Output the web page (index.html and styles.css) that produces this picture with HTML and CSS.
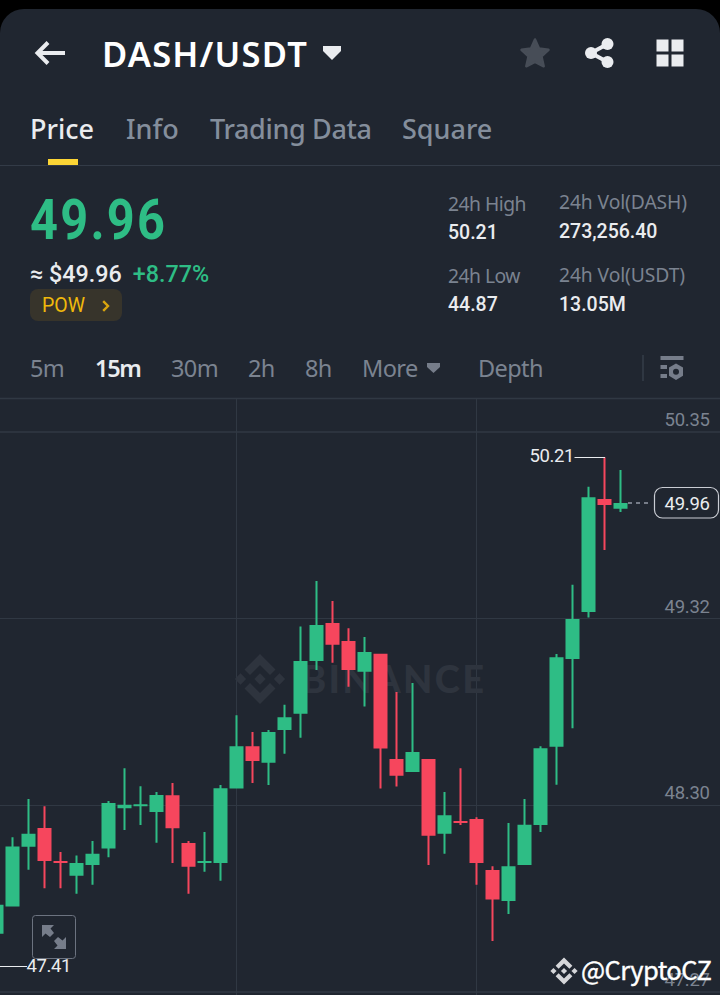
FILE: index.html
```html
<!DOCTYPE html>
<html lang="en">
<head>
    <meta charset="UTF-8">
    <meta name="viewport" content="width=device-width, initial-scale=1.0">
    <title>DASH/USDT</title>
    <link rel="stylesheet" href="styles.css">
</head>
<body>
    <div class="screen">
        <header class="header">
            <svg class="back" width="32" height="26" viewBox="0 0 32 26">
                <path d="M14 2.5L3.5 13L14 23.5M3.5 13H31" fill="none" stroke="#eaecef" stroke-width="4"/>
            </svg>
            <h1>DASH/USDT</h1>
            <svg class="caret" width="18" height="14" viewBox="0 0 18 14">
                <path d="M0 0H18V5L9 14L0 5Z" fill="#eaecef"/>
            </svg>
            <div class="actions">
                <svg width="32" height="32" viewBox="0 0 32 32">
                    <path d="M16 2.5L20 11.6L29.5 12.8L22.5 19.4L24.7 29.3L16 25L7.3 29.3L9.5 19.4L2.5 12.8L12 11.6Z" fill="#474d57" stroke="#474d57" stroke-width="2.5" stroke-linejoin="round"/>
                </svg>
                <svg width="32" height="32" viewBox="0 0 32 32">
                    <path d="M24.5 7L8 16L24.5 25" fill="none" stroke="#eaecef" stroke-width="4"/>
                    <circle cx="24.5" cy="7" r="6" fill="#eaecef"/>
                    <circle cx="8" cy="16" r="6" fill="#eaecef"/>
                    <circle cx="24.5" cy="25" r="6" fill="#eaecef"/>
                </svg>
                <svg width="28" height="28" viewBox="0 0 28 28">
                    <path d="M.5 .5h12v12h-12zM15.500 .5h12v12h-12zM.5 15.500h12v12h-12zM15.500 15.500h12v12h-12z" fill="#eaecef"/>
                </svg>
            </div>
        </header>

        <nav class="tabs">
            <a class="active">Price</a>
            <a>Info</a>
            <a>Trading Data</a>
            <a>Square</a>
        </nav>

        <section class="ticker">
            <div class="price-box">
                <div class="price"><span>49.96</span></div>
                <div class="sub"><span class="usd">≈ $49.96</span><span class="change">+8.77%</span></div>
                <div class="tag">
                    POW
                    <svg width="8" height="12" viewBox="0 0 8 12">
                        <path d="M1.200 1.200L6 6L1.200 10.800" fill="none" stroke="#d9a50e" stroke-width="2.400"/>
                    </svg>
                </div>
            </div>
            <div class="stats">
                <dl><dt>24h High</dt><dd>50.21</dd></dl>
                <dl><dt>24h Low</dt><dd>44.87</dd></dl>
            </div>
            <div class="stats volume">
                <dl><dt>24h Vol(DASH)</dt><dd>273,256.40</dd></dl>
                <dl><dt>24h Vol(USDT)</dt><dd>13.05M</dd></dl>
            </div>
        </section>

        <nav class="intervals">
            <span>5m</span>
            <span class="active">15m</span>
            <span>30m</span>
            <span>2h</span>
            <span>8h</span>
            <span class="more">More
                <svg width="13" height="10" viewBox="0 0 13 10"><path d="M0 0H13V4L6.500 10L0 4Z" fill="#767d8a"/></svg>
            </span>
            <span class="depth">Depth</span>
            <span class="settings">
                <svg width="24" height="26" viewBox="0 0 24 26">
                    <path d="M.5 1H23.500V5H.5zM.5 10H7V14H.5zM.5 19H7V23H.5z" fill="#767d8a"/>
                    <path fill-rule="evenodd" d="M16 8.500L23 12.600V20.800L16 25L9 20.800V12.600ZM16 13.700A3 3 0 1 0 16 19.700A3 3 0 1 0 16 13.700Z" fill="#767d8a"/>
                </svg>
            </span>
        </nav>

        <svg class="chart" width="720" height="598" viewBox="0 397 720 598">
            <defs>
                <g id="logo">
                    <path d="M0 -25L15.500 -9.500L10 -4L0 -14L-10 -4L-15.500 -9.500Z"/>
                    <path d="M0 25L15.500 9.500L10 4L0 14L-10 4L-15.500 9.500Z"/>
                    <path d="M0 -5.700L5.700 0L0 5.700L-5.700 0Z"/>
                    <path d="M-19.500 -5.700L-13.800 0L-19.500 5.700L-25.200 0Z"/>
                    <path d="M19.500 -5.700L25.200 0L19.500 5.700L13.800 0Z"/>
                </g>
            </defs>

            <g class="grid">
                <path d="M0 398.500H720M0 432H720M0 992H720" stroke-width="1.600"/>
                <path d="M0 618.500H720M0 805.500H720M236.500 398V995M476.500 398V995"/>
            </g>

            <g class="watermark">
                <use href="#logo" x="260" y="679"/>
                <text x="301" y="693" textLength="183">BINANCE</text>
            </g>

            <g id="candles"></g>

            <g class="axis">
                <text x="664.500" y="426" textLength="45.500">50.35</text>
                <text x="664.500" y="613" textLength="45.500">49.32</text>
                <text x="664.500" y="799" textLength="45.500">48.30</text>
                <text x="664.500" y="986" textLength="45.500">47.27</text>
            </g>

            <path d="M628 503H650" stroke="#9299a5" stroke-width="1.400" stroke-dasharray="4 4"/>
            <rect x="654.500" y="487.500" width="64" height="30.500" rx="8" fill="#202630" stroke="#c9ccd3" stroke-width="1.200"/>
            <g class="marks">
                <text x="664.500" y="510" textLength="45.500">49.96</text>
                <text x="529.500" y="462" textLength="45">50.21</text>
                <text x="26.500" y="972" textLength="45">47.41</text>
                <path d="M574.500 457.500H605M0 966.500H27"/>
            </g>

            <g class="expand">
                <rect x="32.500" y="915.500" width="43" height="43" rx="3"/>
                <path d="M42 925H54L50.500 928.500L54 933L50 937L45.500 933.500L42 937ZM66 949H54L57.500 945.500L54 941L58 937L62.500 940.500L66 937Z"/>
            </g>

            <g class="author">
                <use href="#logo" transform="translate(564 971) scale(.54)"/>
                <text x="581" y="980" textLength="131">@CryptoCZ</text>
            </g>
        </svg>
    </div>

    <script>
        // high, body top, body bottom, low, direction
        const candles = [
            [904.7, 904.7, 933.7, 933.7, 'up'],
            [837.3, 846.5, 906.5, 906.5, 'up'],
            [799, 833.7, 846.7, 869.7, 'up'],
            [806.3, 828, 861, 888.3, 'down'],
            [852, 861, 863, 888.3, 'down'],
            [855.5, 863, 875.7, 893.7, 'up'],
            [841, 853.7, 865, 884.7, 'up'],
            [801, 803, 848.5, 857.3, 'up'],
            [768.3, 804.8, 808.3, 830, 'up'],
            [786.3, 804.3, 806.3, 825, 'up'],
            [792, 795, 812, 842.7, 'up'],
            [783, 795.3, 828.3, 863, 'down'],
            [841, 843, 866.7, 893.7, 'down'],
            [832, 861, 863, 871.7, 'up'],
            [785, 788.3, 863, 880.7, 'up'],
            [715.3, 746.3, 788.5, 788.5, 'up'],
            [732, 746.3, 761, 783, 'down'],
            [730, 732, 762.7, 785, 'up'],
            [704.7, 717.3, 730, 753.7, 'up'],
            [626.5, 661, 713.7, 737.7, 'up'],
            [581, 625, 661, 670, 'up'],
            [601, 623, 644.7, 662.7, 'down'],
            [628.3, 641, 670, 686.7, 'down'],
            [637, 652, 671.7, 706.5, 'up'],
            [653.7, 653.7, 748.5, 788.5, 'down'],
            [692, 759, 775.7, 786.5, 'down'],
            [683, 752, 772, 772, 'up'],
            [759, 759, 835.7, 865, 'down'],
            [792, 815.3, 833.7, 853.7, 'up'],
            [768.3, 821, 823, 825, 'down'],
            [817.3, 819, 863, 884.7, 'down'],
            [866.3, 870, 899.5, 941, 'down'],
            [823, 866.3, 901, 914, 'up'],
            [799, 824.7, 865, 865, 'up'],
            [746.3, 748.3, 825, 832, 'up'],
            [654, 657.3, 746.7, 784.7, 'up'],
            [584.7, 619, 659, 728.3, 'up'],
            [486.7, 497.3, 612, 617.5, 'up'],
            [457.3, 499, 505, 550, 'down'],
            [470, 503, 508.7, 512, 'up']
        ];

        const svgNS = 'http://www.w3.org/2000/svg';
        const group = document.getElementById('candles');

        candles.forEach(([high, top, bottom, low, dir], i) => {
            const x = i * 16 - 3.5;
            const path = document.createElementNS(svgNS, 'path');
            path.setAttribute('class', dir);
            path.setAttribute('d', `M${x - 1} ${high}h2V${low}h-2ZM${x - 7} ${top}h14V${bottom}h-14Z`);
            group.appendChild(path);
        });
    </script>
</body>
</html>
```
FILE: styles.css
```css
body {
    margin: 0;
    padding-top: 9px;
    background: #000;
    font-family: 'Noto Sans', sans-serif;
    color: #eaecef;
}

.screen {
    width: 720px;
    height: 986px;
    background: #202630;
    border-radius: 24px 24px 0 0;
    overflow: hidden;
}

.header {
    display: flex;
    align-items: center;
    height: 90px;
    box-sizing: border-box;
    padding: 0 36px 2px 34px;
}

h1 {
    margin: 1px 0 0 36px;
    width: 206px;
    font-size: 34.5px;
    font-weight: 600;
    line-height: 48px;
    letter-spacing: 1.2px;
    color: #fff;
    white-space: nowrap;
}

.caret {
    margin-left: 15px;
}

.actions {
    display: flex;
    align-items: center;
    margin-left: auto;
}

.actions svg + svg {
    margin-left: 32px;
}

.actions svg:last-child {
    margin-left: 41px;
}

.tabs {
    display: grid;
    grid-template-columns: 96px 84px 192px 1fr;
    height: 66px;
    padding-left: 30px;
    border-bottom: 1px solid #333b47;
    font-size: 27px;
    font-weight: 500;
    line-height: 59px;
    color: #848e9c;
    white-space: nowrap;
}

.tabs a:nth-child(3) {
    letter-spacing: -0.35px;
}

.tabs .active {
    color: #eaecef;
}

.tabs .active::after {
    content: "";
    display: block;
    width: 30px;
    height: 6px;
    margin: 1px 0 0 18px;
    background: #fcd535;
}

.ticker {
    display: flex;
    height: 174px;
    padding-left: 30px;
}

.price-box {
    width: 418px;
    padding-top: 20px;
}

.price {
    height: 68px;
    font-family: Roboto, sans-serif;
    font-size: 56px;
    font-weight: 700;
    line-height: 68px;
    color: #2ebd85;
}

.price span {
    display: inline-block;
    letter-spacing: 2.6px;
    transform: scaleX(0.87);
    transform-origin: left;
}

.sub {
    display: flex;
    gap: 11px;
    margin-top: 3px;
    height: 32px;
    line-height: 34px;
    font-family: Roboto, sans-serif;
    font-size: 23.3px;
    font-weight: 500;
}

.change {
    color: #2ebd85;
}

.tag {
    display: flex;
    align-items: center;
    justify-content: space-between;
    box-sizing: border-box;
    width: 92px;
    height: 32px;
    padding: 1px 12px 0;
    border-radius: 8px;
    background: #37342b;
    font-family: Roboto, sans-serif;
    font-size: 19.5px;
    color: #f0b90b;
}

.stats {
    display: flex;
    flex-direction: column;
    gap: 16px;
    width: 111px;
    padding-top: 24px;
    white-space: nowrap;
}

.volume {
    gap: 15px;
    padding-top: 21px;
}

.stats dl {
    margin: 0;
}

.stats dt {
    font-size: 19.3px;
    line-height: 28px;
    letter-spacing: -0.1px;
    color: #7b8390;
}

.stats:not(.volume) dt {
    letter-spacing: -0.5px;
}

.volume dt {
    line-height: 30px;
}

.stats dd {
    margin: 0;
    font-family: Roboto, sans-serif;
    font-size: 19.5px;
    font-weight: 500;
    line-height: 29px;
    height: 28px;
}

.intervals {
    display: grid;
    grid-template-columns: 65px 76px 77px 57px 57px 116px 164px 1fr;
    align-items: center;
    height: 57px;
    box-sizing: border-box;
    padding: 0 0 2px 30px;
    font-size: 23.5px;
    letter-spacing: -0.6px;
    color: #7b8390;
}

.intervals .active {
    font-weight: 600;
    letter-spacing: -1.3px;
    color: #eaecef;
}

.more svg {
    margin-left: 4px;
    vertical-align: 4px;
}

.settings {
    display: flex;
    padding-left: 16px;
    border-left: 2px solid #2f3742;
}

.chart {
    display: block;
    font-family: Roboto, sans-serif;
    font-size: 18.5px;
}

.grid {
    fill: none;
    stroke: #303843;
}

.watermark {
    fill: #2e343e;
    font-family: Lato, sans-serif;
    font-size: 38px;
    font-weight: 900;
}

.up {
    fill: #2ebd85;
}

.down {
    fill: #f6465d;
}

.axis {
    fill: #7b8390;
}

.marks {
    fill: #eaecef;
}

.marks path {
    stroke: #eaecef;
}

.expand rect {
    fill: none;
    stroke: #6c7380;
}

.expand path {
    fill: #767d8a;
}

.author {
    fill: #d5d6d9;
}

.author text {
    font-family: 'Noto Sans CJK SC', 'Noto Sans', sans-serif;
    font-size: 25.5px;
    font-weight: 400;
    fill: #fff;
    stroke: #fff;
    stroke-width: 0.4px;
}
```
